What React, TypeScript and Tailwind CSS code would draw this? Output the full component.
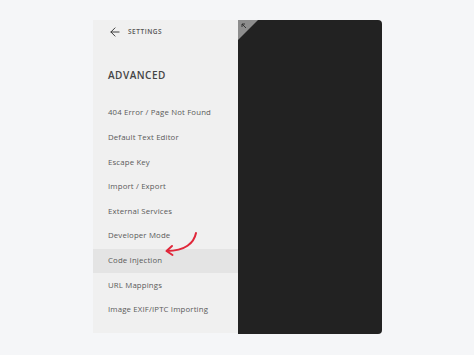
import React from 'react';
import { ArrowLeft } from 'lucide-react';

const ITEMS = [
  '404 Error / Page Not Found',
  'Default Text Editor',
  'Escape Key',
  'Import / Export',
  'External Services',
  'Developer Mode',
  'Code Injection',
  'URL Mappings',
  'Image EXIF/IPTC Importing',
];

export default function App() {
  return (
    <div
      className="w-[474px] h-[355px] bg-[#f5f6f8] flex pt-[20px] pl-[93px]"
      style={{ fontFamily: '"Open Sans", "Liberation Sans", sans-serif' }}
    >
      {/* Sidebar */}
      <div className="w-[145px] h-[313px] bg-[#f0f0f0] flex flex-col">
        <div className="h-[24px] flex items-center pl-[15px] gap-[6px]">
          <ArrowLeft size={14} strokeWidth={1.6} className="text-[#333]" />
          <span className="text-[6.5px] font-semibold tracking-[0.08em] text-[#555]">SETTINGS</span>
        </div>
        <div className="mt-[25px] pl-[15px] h-[12px] flex items-center">
          <span className="text-[10px] font-semibold tracking-[0.05em] text-[#444]">ADVANCED</span>
        </div>
        <div className="mt-[20px] flex flex-col">
          {ITEMS.map((item) => (
            <div
              key={item}
              className={`h-[24.6px] flex items-center pl-[15px] text-[7.8px] tracking-[0.02em] text-[#5a5a5a] relative ${
                item === 'Code Injection' ? 'bg-[#e4e4e4]' : ''
              }`}
            >
              {item}
              {item === 'Code Injection' && (
                <svg
                  className="absolute left-[70px] top-[-18px]"
                  width="40"
                  height="34"
                  viewBox="0 0 40 34"
                  fill="none"
                >
                  <path d="M33 2 C31 12 22 20 4 20" stroke="#e0273a" strokeWidth="2" strokeLinecap="round" />
                  <path d="M9 15 L3.5 20 L9.5 24" stroke="#e0273a" strokeWidth="2" strokeLinecap="round" strokeLinejoin="round" />
                </svg>
              )}
            </div>
          ))}
        </div>
      </div>

      {/* Preview panel */}
      <div className="w-[144px] h-[314px] bg-[#222222] rounded-r-[4px] relative overflow-hidden">
        <svg className="absolute left-0 top-0" width="20" height="20" viewBox="0 0 20 20">
          <polygon points="0,0 20,0 0,20" fill="#8d8d8d" />
          <path d="M4 7 L4 4 L7 4 M4 4 L8 8" stroke="#2a2a2a" strokeWidth="0.9" fill="none" />
        </svg>
      </div>
    </div>
  );
}
